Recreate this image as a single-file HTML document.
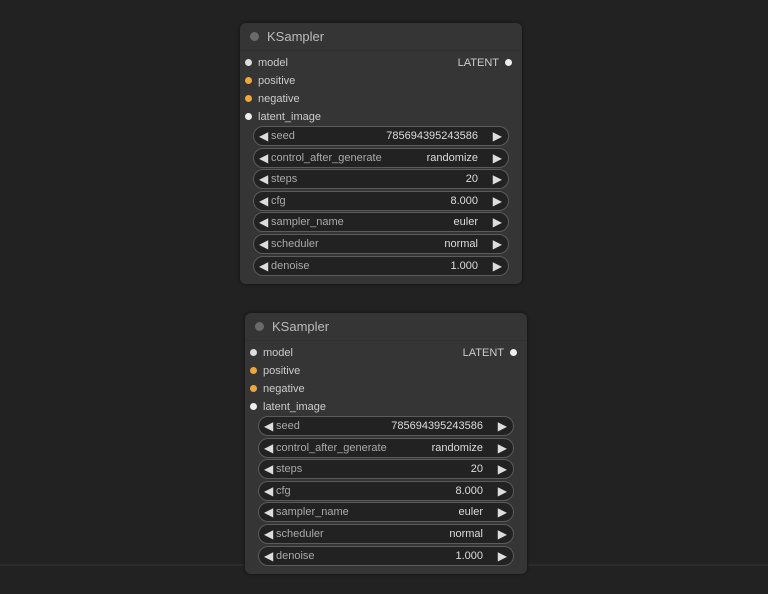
<!DOCTYPE html>
<html><head><style>
body{margin:0;width:768px;height:594px;background:#222;overflow:hidden;font-family:"Liberation Sans",sans-serif;position:relative}
.hl{position:absolute;left:0;top:564px;width:768px;height:2px;background:#2c2c2c}
.node{position:absolute;width:282px;height:261px;background:#353535;border-radius:6px;box-shadow:0 0 3px #111}
.title{position:absolute;left:0;top:0;width:282px;height:27px;border-bottom:1px solid #313131;}
.title .dot{position:absolute;left:10px;top:9px;width:9px;height:9px;border-radius:50%;background:#6a6a6a}
.title span{position:absolute;left:27px;top:6px;font-size:13px;color:#bbb}
.in{position:absolute;left:18px;font-size:11px;color:#ccc}
.in i{position:absolute;left:-13px;top:2px;width:7px;height:7px;border-radius:50%}
.out{position:absolute;right:23px;top:34px;font-size:11px;color:#ccc}
.out i{position:absolute;right:-13px;top:2px;width:7px;height:7px;border-radius:50%;background:#eee}
.w{position:absolute;left:13px;width:254px;height:18px;border:1px solid #5b5b5b;border-radius:10px;background:#222;font-size:11px}
.w .l{position:absolute;left:5px;top:2px;color:#ddd;font-size:12px}
.w .n{position:absolute;left:17px;top:3px;color:#aaa}
.w .v{position:absolute;right:30px;top:3px;color:#ddd}
.w .r{position:absolute;right:6px;top:2px;color:#ddd;font-size:12px}
</style></head><body>
<div class="hl"></div>
<div class="node" style="left:240px;top:23px" id="a"></div>
<div class="node" style="left:245px;top:313px" id="b"></div>
<script>
const inputs=[["model","#ddd"],["positive","#f0a63c"],["negative","#f0a63c"],["latent_image","#eee"]];
const ws=[["seed","785694395243586"],["control_after_generate","randomize"],["steps","20"],["cfg","8.000"],["sampler_name","euler"],["scheduler","normal"],["denoise","1.000"]];
for(const id of ["a","b"]){
let h='<div class="title"><div class="dot"></div><span>KSampler</span></div>';
inputs.forEach((x,i)=>{h+=`<div class="in" style="top:${34+i*18}px"><i style="background:${x[1]}"></i>${x[0]}</div>`});
h+='<div class="out"><i></i>LATENT</div>';
ws.forEach((x,i)=>{h+=`<div class="w" style="top:${103+i*21.6}px"><span class="l">◀</span><span class="n">${x[0]}</span><span class="v">${x[1]}</span><span class="r">▶</span></div>`});
document.getElementById(id).innerHTML=h;}
</script>
</body></html>
